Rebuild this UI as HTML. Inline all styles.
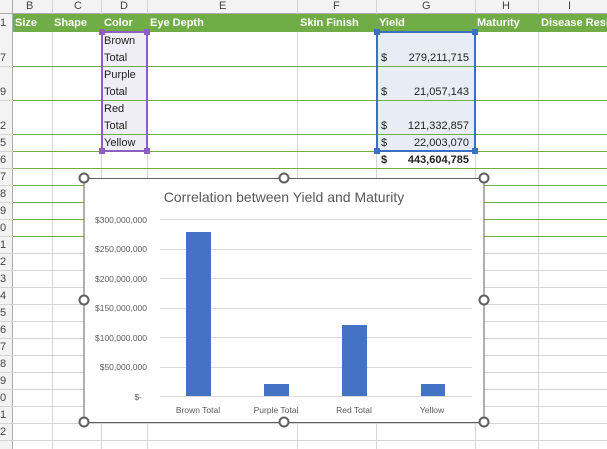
<!DOCTYPE html>
<html><head><meta charset="utf-8"><style>
body{margin:0;width:607px;height:449px;overflow:hidden;background:#fff;font-family:"Liberation Sans",sans-serif;position:relative}
.a{position:absolute}
.t{position:absolute;font-size:11px;color:#222;white-space:nowrap}
</style></head><body>
<svg class="a" style="left:0;top:0" width="607" height="449">
<rect x="0" y="0" width="607" height="14" fill="#f3f3f3"/>
<line x1="0" y1="13.5" x2="607" y2="13.5" stroke="#ababab"/>
<rect x="0" y="14" width="13" height="435" fill="#f3f3f3"/>
<line x1="12.5" y1="0" x2="12.5" y2="449" stroke="#ababab"/>
<g stroke="#d4d4d4">
<line x1="52.5" y1="0" x2="52.5" y2="449"/><line x1="101.5" y1="0" x2="101.5" y2="449"/>
<line x1="147.5" y1="0" x2="147.5" y2="449"/><line x1="297.5" y1="0" x2="297.5" y2="449"/>
<line x1="376.5" y1="0" x2="376.5" y2="449"/><line x1="475.5" y1="0" x2="475.5" y2="449"/>
<line x1="538.5" y1="0" x2="538.5" y2="449"/>
<line x1="0" y1="253.5" x2="607" y2="253.5"/><line x1="0" y1="270.5" x2="607" y2="270.5"/>
<line x1="0" y1="287.5" x2="607" y2="287.5"/><line x1="0" y1="304.5" x2="607" y2="304.5"/>
<line x1="0" y1="321.5" x2="607" y2="321.5"/><line x1="0" y1="338.5" x2="607" y2="338.5"/>
<line x1="0" y1="355.5" x2="607" y2="355.5"/><line x1="0" y1="372.5" x2="607" y2="372.5"/>
<line x1="0" y1="389.5" x2="607" y2="389.5"/><line x1="0" y1="406.5" x2="607" y2="406.5"/>
<line x1="0" y1="423.5" x2="607" y2="423.5"/><line x1="0" y1="440.5" x2="607" y2="440.5"/>
<line x1="0" y1="66.5" x2="13" y2="66.5"/><line x1="0" y1="100.5" x2="13" y2="100.5"/>
<line x1="0" y1="134.5" x2="13" y2="134.5"/><line x1="0" y1="151.5" x2="13" y2="151.5"/>
<line x1="0" y1="168.5" x2="13" y2="168.5"/><line x1="0" y1="185.5" x2="13" y2="185.5"/>
<line x1="0" y1="202.5" x2="13" y2="202.5"/><line x1="0" y1="219.5" x2="13" y2="219.5"/>
<line x1="0" y1="236.5" x2="13" y2="236.5"/>
</g>
<rect x="13" y="14" width="594" height="18" fill="#70ad47"/>
<rect x="102" y="32" width="45" height="119" fill="#efedf5"/>
<rect x="377" y="32" width="98" height="119" fill="#e8ecf5"/>
<g stroke="#70ad47">
<line x1="13" y1="66.5" x2="607" y2="66.5"/><line x1="13" y1="100.5" x2="607" y2="100.5"/>
<line x1="13" y1="134.5" x2="607" y2="134.5"/><line x1="13" y1="151.5" x2="607" y2="151.5"/>
<line x1="13" y1="168.5" x2="607" y2="168.5"/><line x1="13" y1="185.5" x2="607" y2="185.5"/>
<line x1="13" y1="202.5" x2="607" y2="202.5"/><line x1="13" y1="219.5" x2="607" y2="219.5"/>
<line x1="13" y1="236.5" x2="607" y2="236.5"/>
</g>
<rect x="102" y="32" width="45" height="119" fill="none" stroke="#8e5fbf" stroke-width="2"/>
<g fill="#8e5fbf"><rect x="99" y="29" width="6" height="6"/><rect x="144" y="29" width="6" height="6"/><rect x="99" y="148" width="6" height="6"/><rect x="144" y="148" width="6" height="6"/></g>
<rect x="377" y="32" width="98" height="119" fill="none" stroke="#3b6fc4" stroke-width="2"/>
<g fill="#3b6fc4"><rect x="374" y="29" width="6" height="6"/><rect x="472" y="29" width="6" height="6"/><rect x="374" y="148" width="6" height="6"/><rect x="472" y="148" width="6" height="6"/></g>
</svg>
<div class="t" style="left:26px;top:0;font-size:11px;color:#444">B</div>
<div class="t" style="left:74px;top:0;color:#444">C</div>
<div class="t" style="left:120px;top:0;color:#444">D</div>
<div class="t" style="left:219px;top:0;color:#444">E</div>
<div class="t" style="left:333px;top:0;color:#444">F</div>
<div class="t" style="left:422px;top:0;color:#444">G</div>
<div class="t" style="left:502px;top:0;color:#444">H</div>
<div class="t" style="left:568px;top:0;color:#444">I</div>
<div class="t" style="left:0;top:17px;color:#444">1</div>
<div class="t" style="left:0;top:52px;color:#444">7</div>
<div class="t" style="left:0;top:86px;color:#444">9</div>
<div class="t" style="left:0;top:120px;color:#444">2</div>
<div class="t" style="left:0;top:137px;color:#444">5</div>
<div class="t" style="left:0;top:154px;color:#444">6</div>
<div class="t" style="left:0;top:171px;color:#444">7</div>
<div class="t" style="left:0;top:188px;color:#444">8</div>
<div class="t" style="left:0;top:205px;color:#444">9</div>
<div class="t" style="left:0;top:222px;color:#444">0</div>
<div class="t" style="left:0;top:239px;color:#444">1</div>
<div class="t" style="left:0;top:256px;color:#444">2</div>
<div class="t" style="left:0;top:273px;color:#444">3</div>
<div class="t" style="left:0;top:290px;color:#444">4</div>
<div class="t" style="left:0;top:307px;color:#444">5</div>
<div class="t" style="left:0;top:324px;color:#444">6</div>
<div class="t" style="left:0;top:341px;color:#444">7</div>
<div class="t" style="left:0;top:358px;color:#444">8</div>
<div class="t" style="left:0;top:375px;color:#444">9</div>
<div class="t" style="left:0;top:392px;color:#444">0</div>
<div class="t" style="left:0;top:409px;color:#444">1</div>
<div class="t" style="left:0;top:426px;color:#444">2</div>
<div style="color:#fff;font-weight:bold;font-size:11px">
<div class="t" style="left:15px;top:17px;color:#fff">Size</div>
<div class="t" style="left:54px;top:17px;color:#fff">Shape</div>
<div class="t" style="left:104px;top:17px;color:#fff">Color</div>
<div class="t" style="left:150px;top:17px;color:#fff">Eye Depth</div>
<div class="t" style="left:300px;top:17px;color:#fff">Skin Finish</div>
<div class="t" style="left:379px;top:17px;color:#fff">Yield</div>
<div class="t" style="left:477px;top:17px;color:#fff">Maturity</div>
<div class="t" style="left:541px;top:17px;color:#fff">Disease Resis</div>
</div>
<div class="t" style="left:104px;top:35px">Brown</div>
<div class="t" style="left:104px;top:52px">Total</div>
<div class="t" style="left:104px;top:69px">Purple</div>
<div class="t" style="left:104px;top:86px">Total</div>
<div class="t" style="left:104px;top:103px">Red</div>
<div class="t" style="left:104px;top:120px">Total</div>
<div class="t" style="left:104px;top:137px">Yellow</div>
<div class="t" style="left:381px;top:52px">$</div><div class="t" style="right:138px;top:52px">279,211,715</div>
<div class="t" style="left:381px;top:86px">$</div><div class="t" style="right:138px;top:86px">21,057,143</div>
<div class="t" style="left:381px;top:120px">$</div><div class="t" style="right:138px;top:120px">121,332,857</div>
<div class="t" style="left:381px;top:137px">$</div><div class="t" style="right:138px;top:137px">22,003,070</div>
<div class="t" style="left:381px;top:154px;font-weight:bold">$</div><div class="t" style="right:138px;top:154px;font-weight:bold">443,604,785</div>
<svg class="a" style="left:0;top:0" width="607" height="449">
<rect x="84" y="178.5" width="400" height="244" fill="#fff" stroke="#5f5f5f" stroke-width="1"/>
<g stroke="#d9d9d9">
<line x1="160" y1="219.5" x2="472" y2="219.5"/><line x1="160" y1="249.5" x2="472" y2="249.5"/>
<line x1="160" y1="278.5" x2="472" y2="278.5"/><line x1="160" y1="308.5" x2="472" y2="308.5"/>
<line x1="160" y1="337.5" x2="472" y2="337.5"/><line x1="160" y1="367.5" x2="472" y2="367.5"/>
<line x1="160" y1="396.5" x2="472" y2="396.5"/>
</g>
<g fill="#4472c4">
<rect x="186" y="232" width="25" height="164"/><rect x="264" y="384" width="25" height="12"/>
<rect x="342" y="325" width="25" height="71"/><rect x="421" y="384" width="24" height="12"/>
</g>
<text x="284" y="202" font-size="14" fill="#595959" text-anchor="middle" font-family="Liberation Sans">Correlation between Yield and Maturity</text>
<g font-size="8.5" fill="#595959" text-anchor="end" font-family="Liberation Sans">
<text x="147" y="223">$300,000,000</text><text x="147" y="252">$250,000,000</text>
<text x="147" y="282">$200,000,000</text><text x="147" y="311">$150,000,000</text>
<text x="147" y="341">$100,000,000</text><text x="147" y="370">$50,000,000</text>
<text x="142" y="400">$-</text>
</g>
<g font-size="8.5" fill="#595959" text-anchor="middle" font-family="Liberation Sans">
<text x="198" y="413">Brown Total</text><text x="276" y="413">Purple Total</text>
<text x="354" y="413">Red Total</text><text x="432" y="413">Yellow</text>
</g>
<g fill="#fff" stroke="#5f5f5f" stroke-width="2">
<circle cx="84" cy="178" r="4.5"/><circle cx="284" cy="178" r="4.5"/><circle cx="484" cy="178" r="4.5"/>
<circle cx="84" cy="300" r="4.5"/><circle cx="484" cy="300" r="4.5"/>
<circle cx="84" cy="422" r="4.5"/><circle cx="284" cy="422" r="4.5"/><circle cx="484" cy="422" r="4.5"/>
</g>
</svg>
</body></html>
